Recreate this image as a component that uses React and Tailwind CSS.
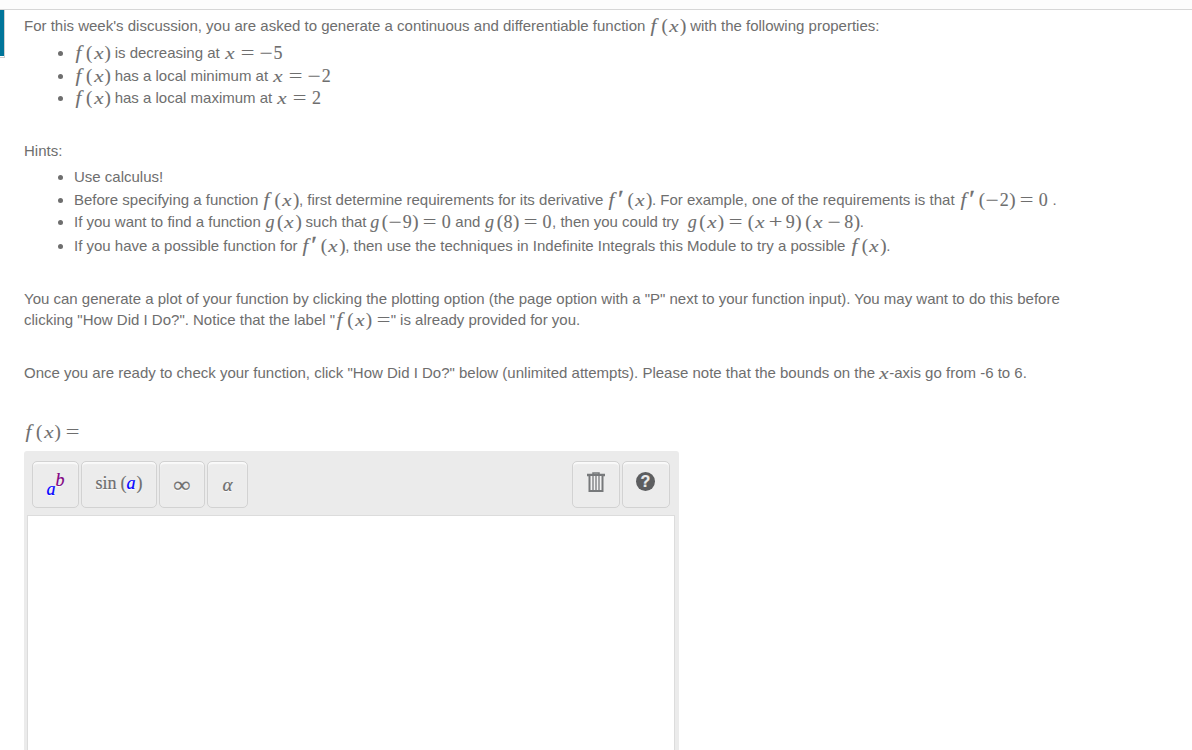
const glyphs = {
  f: "w-[11px] italic text-[19px] relative -left-[1px] scale-x-110",
  g: "w-[11px] italic text-[18px] relative -left-[0.5px]",
  x: "w-[12px] italic text-[17.5px] scale-x-120",
  "(": "w-[7.5px] text-[19px] relative left-[0.5px]",
  ")": "w-[6px] text-[19px]",
  "=": "w-[23px] text-[18px] scale-x-135",
  "+": "w-[19px] text-[18px] scale-x-135",
  "−": "w-[14px] text-[18px] scale-x-130",
  "′": "w-[8px] italic text-[24px] relative -left-[3px] [-webkit-text-stroke:0.5px]",
};

const digit = "w-[10px] text-[18px]";

function M({ children, className = "" }) {
  return (
    <span
      className={
        "relative top-px inline-block leading-[0] font-['Liberation_Serif',serif] [-webkit-text-stroke:0.1px] " +
        className
      }
    >
      {[...children].map((c, i) =>
        c === " " ? (
          <span key={i} className="inline-block w-[3px]" />
        ) : (
          <span
            key={i}
            className={"inline-block text-center " + (glyphs[c] || digit)}
          >
            {c}
          </span>
        )
      )}
    </span>
  );
}

function Item({ children, className = "" }) {
  return (
    <li className={"flex h-[22px] " + className}>
      <span className="mt-[9px] mr-[11px] ml-[34px] h-[5px] w-[5px] shrink-0 rounded-full bg-[#6e6e6e]" />
      <span className="whitespace-pre">{children}</span>
    </li>
  );
}

function Button({ children, className = "" }) {
  return (
    <button
      className={
        "flex h-[47px] items-center justify-center rounded-[5px] border border-[#d2d2d2] bg-[#ececec] font-['Liberation_Serif',serif] shadow-[inset_0_2px_1px_#fafafa] [-webkit-text-stroke:0.2px] [text-shadow:0_1px_1px_#fff] " +
        className
      }
    >
      {children}
    </button>
  );
}

export default function App() {
  return (
    <main className="h-[750px] overflow-hidden bg-white font-['Liberation_Sans',Arial,sans-serif] text-[15px] leading-[22px] text-[#6e6e6e]">
      <div className="h-[10px] border-b border-[#d6d6d6] bg-[#fcfcfc]" />
      <div className="flex">
        <div className="h-[48px] w-[5px] shrink-0 border-r border-b border-[#d0d0d0]">
          <div className="h-[46px] bg-[#00759a]" />
        </div>
        <div className="ml-[19px] pt-[5px] whitespace-pre">
          <p>
            For this week's discussion, you are asked to generate a continuous
            {" and differentiable function "}
            <M>f(x)</M> with the following properties:
          </p>
          <ul className="mt-[5px]">
            <Item>
              <M>f(x)</M> is decreasing at <M>x=−5</M>
            </Item>
            <Item className="mt-px">
              <M>f(x)</M> has a local minimum at <M>x=−2</M>
            </Item>
            <Item>
              <M>f(x)</M> has a local maximum at <M>x=2</M>
            </Item>
          </ul>

          <p className="mt-[31px]">Hints:</p>
          <ul className="mt-[4px]">
            <Item>Use calculus!</Item>
            <Item className="mt-px">
              Before specifying a function <M>f(x)</M>, first determine
              {" requirements for its derivative "}
              <M>f′(x)</M>. For example, one of the requirements is that{" "}
              <M>f′(−2)=0</M> .
            </Item>
            <Item>
              If you want to find a function <M>g(x)</M> such that{" "}
              <M className="-ml-px">g(−9)=0</M> and <M>g(8)=0</M>, then you
              {" could try  "}
              <M>g(x)=(x+9) (x</M>
              <M> − 8)</M>.
            </Item>
            <Item className="mt-[2px]">
              If you have a possible function for{" "}
              <M className="-ml-px">f′(x)</M>, then use the
              {" techniques in Indefinite Integrals this Module to try a possible "}
              <M>f(x)</M>.
            </Item>
          </ul>

          <p className="mt-[31px] leading-[21px]">
            You can generate a plot of your function by clicking the plotting
            {' option (the page option with a "P" next to your function input).'}
            {" You may want to do this before\n"}
            clicking "How Did I Do?". Notice that the label "
            <M className="-mr-[4px]">f(x)=</M>" is
            {" already provided for you."}
          </p>
          <p className="mt-[32px]">
            Once you are ready to check your function, click "How Did I Do?"
            {" below (unlimited attempts). Please note that the bounds on the "}
            <M className="-mx-[1px]">x</M>-axis go from -6 to 6.
          </p>
          <p className="mt-[37px]">
            <M>f(x)=</M>
          </p>

          <section className="mt-[8px] flex h-[310px] w-[655px] flex-col rounded-t-[3px] bg-[#ebebeb] pr-[4px] pl-[3px]">
            <div className="flex h-[64px] gap-[2px] px-[5px] pt-[10px]">
              <Button className="w-[47px] text-[18px]">
                <i className="relative top-[4px] text-[#0000ff]">a</i>
                <i className="relative -top-[5px] text-[#800080]">b</i>
              </Button>
              <Button className="w-[76px] pb-[4px] text-[18px]">
                sin<span className="ml-[4px]">(</span>
                <i className="text-[#0000ff]">a</i>
                <span className="ml-px">)</span>
              </Button>
              <Button className="w-[46px] text-[22px]">
                <span className="scale-x-110">∞</span>
              </Button>
              <Button className="w-[41px] text-[19px] italic">α</Button>
              <Button className="ml-auto w-[48px]">
                <svg width="18" height="20" viewBox="0 0 18 20" className="-mt-[5px]">
                  <path d="M6 2V1h6v1" fill="none" stroke="#77797b" strokeWidth="1.500" />
                  <path d="M0 3h18" stroke="#77797b" strokeWidth="2.500" />
                  <path d="M2.500 4v15h13V4" fill="#f2f2f2" stroke="#77797b" strokeWidth="2" />
                  <path d="M6 4v15M9 4v15M12 4v15" stroke="#77797b" strokeWidth="1.300" />
                </svg>
              </Button>
              <Button className="w-[48px]">
                <span className="-mt-[6px] mr-px flex h-[19px] w-[19px] items-center justify-center rounded-full bg-[#5d5e60] font-['Liberation_Sans'] text-[16px] font-bold text-[#ececec] [text-shadow:none]">
                  ?
                </span>
              </Button>
            </div>
            <div className="grow border border-[#dcdcdc] bg-white" />
          </section>
        </div>
      </div>
    </main>
  );
}
